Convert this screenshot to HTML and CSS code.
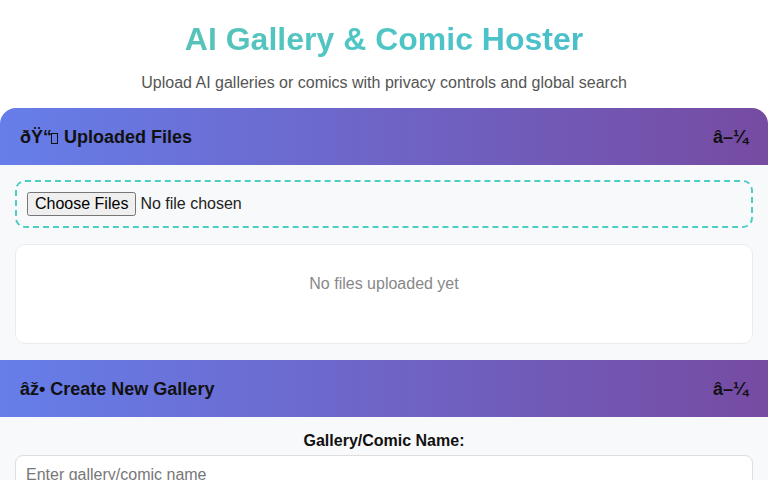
FILE: index.html
```html
<!DOCTYPE html>
<html>
<head>
<meta charset="utf-8">
<link rel="stylesheet" href="styles.css">
</head>
<body>
<header class="top">
  <h1 class="title">AI Gallery &amp; Comic Hoster</h1>
  <p class="subtitle">Upload AI galleries or comics with privacy controls and global search</p>
</header>
<main class="panels">
  <section class="panel">
    <div class="panel-head"><span>ðŸ“<span class="tofu">&#x81;</span> Uploaded Files</span><span class="arrow">â–¼</span></div>
    <div class="panel-body">
      <div class="drop"><input type="file" multiple class="file"></div>
      <div class="empty">No files uploaded yet</div>
    </div>
  </section>
  <section class="panel">
    <div class="panel-head"><span>âž• Create New Gallery</span><span class="arrow">â–¼</span></div>
    <div class="panel-body">
      <label class="label">Gallery/Comic Name:</label>
      <input type="text" class="text-input" placeholder="Enter gallery/comic name">
    </div>
  </section>
</main>
</body>
</html>
```
FILE: styles.css
```css
* { box-sizing: border-box; }
html, body { margin: 0; padding: 0; }
body {
  font-family: "Liberation Sans", Arial, sans-serif;
  background: #ffffff;
  color: #222;
  width: 768px;
  overflow: hidden;
}
.top {
  text-align: center;
  padding: 21px 0 15px;
}
.title {
  margin: 0 0 15px;
  font-size: 32px;
  font-weight: bold;
  line-height: 37px;
  background: linear-gradient(90deg, #5fbfae, #4ec6c6 50%, #45b7d1);
  -webkit-background-clip: text;
  background-clip: text;
  color: transparent;
}
.subtitle {
  margin: 0;
  font-size: 16px;
  line-height: 20px;
  color: #555;
}
.panels {
  border-radius: 16px 16px 0 0;
  overflow: hidden;
  background: #f8f9fa;
}
.panel-head {
  display: flex;
  justify-content: space-between;
  align-items: center;
  height: 57px;
  padding: 1px 20px 0;
  background: linear-gradient(90deg, #667eea, #764ba2);
  color: #111;
  font-size: 18px;
  font-weight: bold;
}
.tofu {
  display: inline-block;
  width: 7px;
  height: 11px;
  margin-left: -1px;
  margin-right: 1px;
  border: 1px solid #111;
  overflow: hidden;
  color: transparent;
  font-size: 1px;
  vertical-align: -1px;
}
.panel-body {
  padding: 15px 15px 16px;
  display: flex;
  flex-direction: column;
  gap: 16px;
  background: #f8f9fa;
}
.drop {
  border: 2px dashed #4ecdc4;
  border-radius: 10px;
  padding: 10px;
  height: 48px;
  display: flex;
  align-items: center;
}
.file {
  font-family: "Liberation Sans", Arial, sans-serif;
  font-size: 16px;
}
.empty {
  height: 100px;
  background: #fff;
  border: 1px solid #e9ecef;
  border-radius: 10px;
  padding-top: 29px;
  text-align: center;
  color: #888;
  font-size: 16px;
  line-height: 20px;
}
.label {
  text-align: center;
  font-weight: bold;
  font-size: 16px;
  color: #111;
  margin-bottom: -11px;
}
.text-input {
  width: 100%;
  height: 40px;
  border: 1px solid #ddd;
  border-radius: 8px;
  padding: 8px 10px;
  font-family: "Liberation Sans", Arial, sans-serif;
  font-size: 16px;
  background: #fff;
}
.text-input::placeholder { color: #777; }
```
